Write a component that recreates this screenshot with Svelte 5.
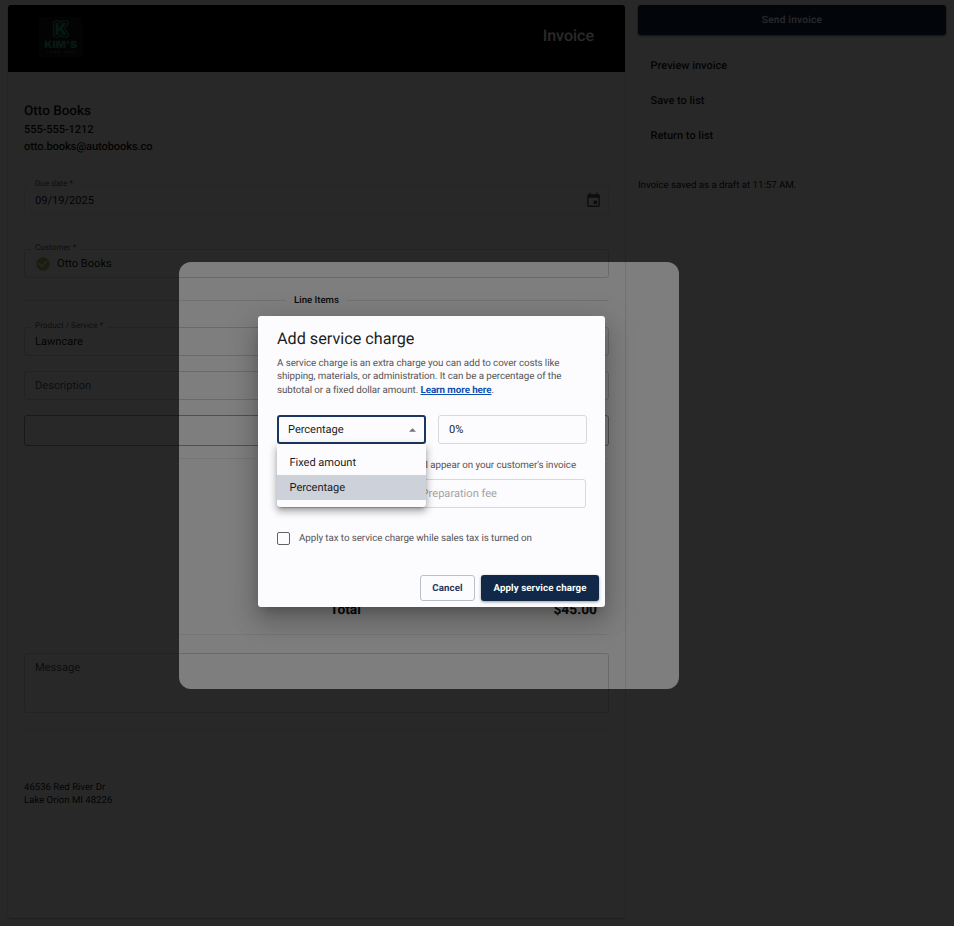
<script lang="ts">
	let chargeType = $state('Percentage');
	let menuOpen = $state(true);
	let applyTax = $state(false);

	const chargeTypes = ['Fixed amount', 'Percentage'];
	const links = ['Preview invoice', 'Save to list', 'Return to list'];

	function pick(type: string) {
		chargeType = type;
		menuOpen = false;
	}
</script>

<div class="page">
	<main class="invoice">
		<header>
			<svg class="logo" viewBox="0 0 43 40" width="43" height="40">
				<rect width="43" height="40" fill="#17171d" />
				<g class="mark" text-anchor="middle">
					<text x="21.8" y="18.3" stroke="#2f9c76" stroke-width="5" stroke-linejoin="round">K</text>
					<text x="21.8" y="18.3" stroke="#17171d" stroke-width="2.8" stroke-linejoin="round">K</text>
					<text x="21.8" y="18.3" fill="#2f9c76">K</text>
				</g>
				<text x="5.3" y="31" class="brand" textLength="33" lengthAdjust="spacingAndGlyphs">KIM'S</text>
				<text x="8" y="35.7" class="tagline" textLength="29">LAWN CARE</text>
			</svg>
			<h1>Invoice</h1>
		</header>

		<div class="body">
			<div class="sender">
				<strong>Otto Books</strong>
				<span>555-555-1212</span>
				<span>otto.books@autobooks.co</span>
			</div>
			<hr />
			<div class="field faint due">
				<span class="label">Due date *</span>
				<span>09/19/2025</span>
				<svg class="calendar" viewBox="0 0 24 24" width="17" height="17">
					<path d="M17 12h-5v5h5v-5zM16 1v2H8V1H6v2H5c-1.11 0-1.99.9-1.99 2L3 19c0 1.1.89 2 2 2h14c1.1 0 2-.9 2-2V5c0-1.1-.9-2-2-2h-1V1h-2zm3 18H5V8h14v11z" />
				</svg>
			</div>
			<hr />
			<div class="field customer">
				<span class="label">Customer *</span>
				<svg class="check" viewBox="0 0 24 24" width="16" height="16">
					<path d="M12 2C6.48 2 2 6.48 2 12s4.48 10 10 10 10-4.48 10-10S17.52 2 12 2zm-2 15-5-5 1.41-1.41L10 14.17l7.59-7.59L19 8l-9 9z" />
				</svg>
				<span>Otto Books</span>
			</div>
			<div class="section-title">Line Items</div>
			<div class="field product">
				<span class="label">Product / Service *</span>
				<span>Lawncare</span>
			</div>
			<div class="field description"><span class="muted">Description</span></div>
			<div class="field blank"></div>
			<hr class="items-end" />
			<div class="totals">
				<hr />
				<div class="total"><span>Total</span><span>$45.00</span></div>
			</div>
			<hr class="totals-end" />
			<div class="field message"><span class="muted">Message</span></div>
			<hr class="gap-a" />
			<hr class="gap-b" />
			<address>46536 Red River Dr<br />Lake Orion MI 48226</address>
		</div>
	</main>

	<aside>
		<button class="send">Send invoice</button>
		<nav>
			{#each links as link (link)}
				<a href="#top">{link}</a>
			{/each}
		</nav>
		<p>Invoice saved as a draft at 11:57 AM.</p>
	</aside>
</div>

<div class="backdrop"></div>

<div class="dialog" role="dialog" aria-label="Add service charge">
	<h2>Add service charge</h2>
	<p class="intro">
		A service charge is an extra charge you can add to cover costs like<br />
		shipping, materials, or administration. It can be a percentage of the<br />
		subtotal or a fixed dollar amount. <a href="#help">Learn more here</a>.
	</p>
	<div class="amount">
		<div class="select-wrap">
			<button class="select" onclick={() => (menuOpen = !menuOpen)}>
				{chargeType}
				<svg class="arrow" viewBox="0 0 8 4" width="7" height="4"><path d="M0 4 4 0l4 4z" /></svg>
			</button>
			{#if menuOpen}
				<ul class="menu">
					{#each chargeTypes as type (type)}
						<li>
							<button class:selected={type === chargeType} onclick={() => pick(type)}>{type}</button>
						</li>
					{/each}
				</ul>
			{/if}
		</div>
		<div class="box">0%</div>
	</div>
	<p class="hint">This will appear on your customer's invoice</p>
	<div class="box fee"><span>Preparation fee</span></div>
	<label class="tax">
		<input type="checkbox" bind:checked={applyTax} />
		Apply tax to service charge while sales tax is turned on
	</label>
	<div class="actions">
		<button class="cancel">Cancel</button>
		<button class="apply">Apply service charge</button>
	</div>
</div>

<div class="spotlight"></div>

<style>
	:global(body) {
		background: #fdfdfe;
		font-family: Roboto, sans-serif;
		text-rendering: geometricPrecision;
		overflow: hidden;
	}
	* {
		box-sizing: border-box;
	}
	button {
		font-family: inherit;
		text-rendering: inherit;
		margin: 0;
		cursor: pointer;
	}
	.page {
		display: grid;
		grid-template-columns: 617px 308px;
		gap: 13px;
		height: 926px;
		padding: 5px 8px 8px;
		color: #111;
	}
	.invoice {
		border-radius: 3px;
		box-shadow: 0 1px 2px rgba(0, 0, 0, 0.3), 0 0 1px rgba(0, 0, 0, 0.2);
	}
	header {
		display: flex;
		align-items: flex-start;
		justify-content: space-between;
		height: 67px;
		padding: 12px 31px 0;
		border-radius: 3px 3px 0 0;
		background: #000;
		color: #fff;
	}
	.mark {
		font: 800 16.5px Inter, sans-serif;
	}
	.brand {
		font: 900 10px Inter, sans-serif;
		fill: #2f9c76;
	}
	.tagline {
		font: 500 3px Inter, sans-serif;
		fill: #777;
	}
	h1 {
		margin: 9px 0 0;
		font-size: 16px;
		font-weight: 500;
		line-height: 20px;
	}
	.body {
		display: flex;
		flex-direction: column;
		padding: 30px 16px 0;
	}
	.sender {
		display: flex;
		flex-direction: column;
		height: 64px;
		padding-top: 1px;
		font-size: 11.2px;
		font-weight: 500;
		line-height: 16.5px;
		letter-spacing: -0.15px;
	}
	.sender strong {
		margin-bottom: 2px;
		font-size: 13.5px;
		font-weight: 500;
		line-height: 17px;
		letter-spacing: 0;
	}
	hr {
		width: 100%;
		height: 1px;
		margin: 0;
		border: 0;
		background: #ececec;
	}
	.field {
		position: relative;
		display: flex;
		align-items: center;
		height: 29px;
		padding: 0 10px;
		border: 1px solid #d4d4d4;
		border-radius: 3px;
		font-size: 11.1px;
	}
	.faint {
		border-color: #e8e8e8;
	}
	.label {
		position: absolute;
		top: -8px;
		left: 6px;
		padding: 0 4px;
		background: #fdfdfe;
		color: #555;
		font-size: 8.2px;
		line-height: 13px;
	}
	.muted {
		color: #555;
	}
	.due {
		justify-content: space-between;
		height: 30px;
		margin: 18px 0 15px;
	}
	.calendar {
		margin-right: -4px;
		fill: #555;
	}
	.customer {
		gap: 6px;
		margin: 18px 0 16px;
	}
	.check {
		fill: #a3bc6a;
	}
	.section-title {
		display: flex;
		align-items: center;
		gap: 8px;
		height: 13px;
		font-size: 9.6px;
		font-weight: 500;
	}
	.section-title::before,
	.section-title::after {
		content: '';
		flex: 1;
		height: 1px;
		background: #e2e2e2;
	}
	.product {
		margin-top: 20px;
	}
	.description {
		margin-top: 15px;
	}
	.blank {
		height: 31px;
		margin-top: 15px;
		border-color: #a0a0a0;
	}
	.items-end {
		margin-top: 12px;
	}
	.totals {
		width: 279px;
		height: 175px;
		padding-top: 134px;
		align-self: flex-end;
	}
	.total {
		display: flex;
		justify-content: space-between;
		padding: 7px 12px 0 0;
		font-size: 13.8px;
		font-weight: 700;
		line-height: 18px;
	}
	.message {
		align-items: flex-start;
		height: 60px;
		margin-top: 18px;
		padding-top: 7px;
	}
	.gap-a {
		margin-top: 15px;
	}
	.gap-b {
		margin-top: 25px;
	}
	address {
		margin-top: 26px;
		font-size: 9.6px;
		font-style: normal;
		line-height: 13.2px;
	}
	aside {
		display: flex;
		flex-direction: column;
	}
	.send {
		height: 30px;
		padding: 1px 0 0;
		border: 0;
		border-radius: 3px;
		background: #112849;
		box-shadow: 0 1px 3px rgba(0, 0, 0, 0.6);
		color: #fff;
		font-size: 10.1px;
		font-weight: 500;
		letter-spacing: 0.25px;
	}
	nav {
		display: flex;
		flex-direction: column;
		height: 117px;
		margin-top: 7px;
		padding: 5px 11.5px;
		border: 1px solid #eee;
		border-radius: 3px;
	}
	nav a {
		color: #111;
		font-size: 11px;
		font-weight: 500;
		line-height: 35px;
		text-decoration: none;
	}
	aside p {
		margin: 20px 0 0;
		font-size: 9.8px;
		line-height: 13px;
		letter-spacing: -0.06px;
	}
	.backdrop {
		position: absolute;
		inset: 0;
		background: rgba(0, 0, 0, 0.5);
	}
	.spotlight {
		position: absolute;
		top: 261.5px;
		left: 179px;
		width: 500px;
		height: 427px;
		border-radius: 12px;
		box-shadow: 0 0 0 1000px rgba(0, 0, 0, 0.68);
		pointer-events: none;
	}
	.dialog {
		position: absolute;
		top: 316px;
		left: 258px;
		width: 347px;
		height: 291px;
		padding: 13px 19px 0;
		border-radius: 3px;
		background: #fcfcfe;
		box-shadow: 0 7px 10px -4px rgba(0, 0, 0, 0.2), 0 16px 25px 2px rgba(0, 0, 0, 0.14), 0 6px 30px 5px rgba(0, 0, 0, 0.12);
		color: #1b1c1e;
	}
	h2 {
		margin: 0;
		font-size: 16.2px;
		font-weight: 400;
		line-height: 20px;
	}
	.intro {
		margin: 8px 0 0;
		color: #555558;
		font-size: 9.8px;
		line-height: 13.4px;
		letter-spacing: -0.08px;
		white-space: nowrap;
	}
	.intro a {
		color: #0b4fb0;
		font-weight: 700;
	}
	.amount {
		display: grid;
		grid-template-columns: 149px 149px;
		gap: 12px;
		margin-top: 18px;
	}
	.select-wrap {
		position: relative;
	}
	.select {
		display: flex;
		align-items: center;
		justify-content: space-between;
		width: 100%;
		height: 29px;
		padding: 0 8px 0 9px;
		border: 2px solid #1c375f;
		border-radius: 3px;
		background: none;
		color: #1b1c1e;
		font-size: 11.1px;
		letter-spacing: -0.05px;
	}
	.arrow {
		fill: #747476;
	}
	.menu {
		position: absolute;
		z-index: 1;
		top: 29px;
		left: 0;
		width: 149px;
		margin: 0;
		padding: 6px 0 7px;
		border-radius: 0 0 3px 3px;
		background: #fcfcfe;
		box-shadow: 0 3px 4px -2px rgba(0, 0, 0, 0.3), 0 5px 7px 1px rgba(0, 0, 0, 0.16), 0 2px 10px 1px rgba(0, 0, 0, 0.14);
		list-style: none;
	}
	.menu button {
		display: block;
		width: 100%;
		height: 25px;
		padding: 0 12.5px;
		border: 0;
		background: none;
		color: #1b1c1e;
		font-size: 11.1px;
		letter-spacing: -0.05px;
		text-align: left;
	}
	.menu .selected {
		background: #cdd1d9;
	}
	.box {
		display: flex;
		align-items: center;
		height: 29px;
		padding: 0 10px;
		border: 1px solid #d9d9dc;
		border-radius: 3px;
		font-size: 11.1px;
	}
	.hint {
		margin: 15px 10px 0 0;
		color: #555558;
		font-size: 9.8px;
		line-height: 14px;
		letter-spacing: -0.08px;
		text-align: right;
	}
	.fee {
		margin-top: 6px;
	}
	.fee span {
		width: 209px;
		color: #a3a3a5;
		text-align: right;
	}
	.tax {
		display: flex;
		align-items: center;
		gap: 9px;
		margin-top: 23px;
		color: #555558;
		font-size: 9.8px;
		line-height: 15px;
		letter-spacing: -0.08px;
	}
	.tax input {
		appearance: none;
		width: 13px;
		height: 13px;
		margin: 0;
		border: 1.5px solid #626264;
		border-radius: 2px;
	}
	.tax input:checked {
		background: #112849;
	}
	.actions {
		display: flex;
		justify-content: flex-end;
		gap: 6px;
		margin: 29px -13px 0 0;
	}
	.actions button {
		height: 26px;
		border-radius: 3px;
		font-size: 9.7px;
		font-weight: 700;
		letter-spacing: 0.1px;
	}
	.cancel {
		width: 55px;
		padding: 0;
		border: 1px solid #b9bfcb;
		background: none;
		color: #1c375f;
	}
	.apply {
		width: 118px;
		padding: 0;
		border: 0;
		background: #112849;
		box-shadow: 0 1px 3px rgba(0, 0, 0, 0.4);
		color: #fff;
	}
</style>
